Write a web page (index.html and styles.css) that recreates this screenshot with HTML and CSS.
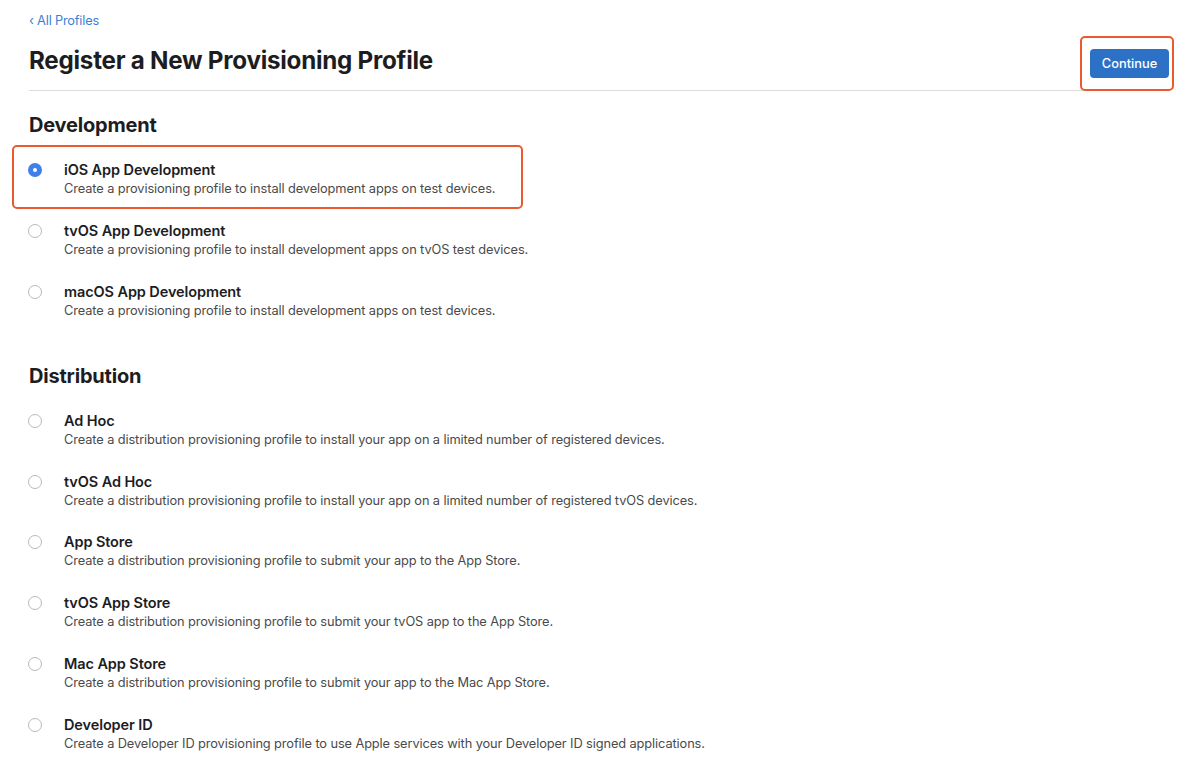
FILE: index.html
```
<!DOCTYPE html>
<html>
<head>
<meta charset="utf-8">
<link rel="stylesheet" href="styles.css">
</head>
<body>
<div class="page">
  <a class="back" href="#">&lsaquo; All Profiles</a>
  <div class="header">
    <h1 class="title">Register a New Provisioning Profile</h1>
    <div class="btn-wrap"><button class="continue">Continue</button></div>
  </div>
  <div class="divider"></div>

  <h2 class="section">Development</h2>
  <div class="options">
    <label class="option highlighted">
      <span class="radio checked"></span>
      <span class="text"><span class="name">iOS App Development</span><span class="desc">Create a provisioning profile to install development apps on test devices.</span></span>
    </label>
    <label class="option">
      <span class="radio"></span>
      <span class="text"><span class="name">tvOS App Development</span><span class="desc">Create a provisioning profile to install development apps on tvOS test devices.</span></span>
    </label>
    <label class="option">
      <span class="radio"></span>
      <span class="text"><span class="name">macOS App Development</span><span class="desc">Create a provisioning profile to install development apps on test devices.</span></span>
    </label>
  </div>

  <h2 class="section dist">Distribution</h2>
  <div class="options">
    <label class="option">
      <span class="radio"></span>
      <span class="text"><span class="name">Ad Hoc</span><span class="desc">Create a distribution provisioning profile to install your app on a limited number of registered devices.</span></span>
    </label>
    <label class="option">
      <span class="radio"></span>
      <span class="text"><span class="name">tvOS Ad Hoc</span><span class="desc">Create a distribution provisioning profile to install your app on a limited number of registered tvOS devices.</span></span>
    </label>
    <label class="option">
      <span class="radio"></span>
      <span class="text"><span class="name">App Store</span><span class="desc">Create a distribution provisioning profile to submit your app to the App Store.</span></span>
    </label>
    <label class="option">
      <span class="radio"></span>
      <span class="text"><span class="name">tvOS App Store</span><span class="desc">Create a distribution provisioning profile to submit your tvOS app to the App Store.</span></span>
    </label>
    <label class="option">
      <span class="radio"></span>
      <span class="text"><span class="name">Mac App Store</span><span class="desc">Create a distribution provisioning profile to submit your app to the Mac App Store.</span></span>
    </label>
    <label class="option">
      <span class="radio"></span>
      <span class="text"><span class="name">Developer ID</span><span class="desc">Create a Developer ID provisioning profile to use Apple services with your Developer ID signed applications.</span></span>
    </label>
  </div>
</div>
</body>
</html>
```

FILE: styles.css
```
* { box-sizing: border-box; }
html, body { margin: 0; padding: 0; background: #fff; }
body {
  font-family: Inter, "Liberation Sans", Arial, sans-serif;
  color: #1d1d1f;
  -webkit-font-smoothing: antialiased;
}
.page {
  padding: 12px 19px 0 29px;
}
.back {
  display: block;
  font-size: 12.8px;
  color: #3d7fd6;
  text-decoration: none;
  line-height: 17px;
  letter-spacing: -0.2px;
}
.header {
  display: flex;
  justify-content: space-between;
  align-items: center;
  margin-top: 6px;
  height: 56px;
}
.title {
  margin: 0;
  font-size: 24.2px;
  font-weight: 700;
  letter-spacing: -0.25px;
  line-height: 30px;
  color: #1d1d1f;
  margin-top: -5px;
}
.btn-wrap {
  border: 2px solid #ea5a2e;
  border-radius: 5px;
  padding: 11px 3px 11px 8px;
  margin-top: 1px;
}
.continue {
  display: block;
  background: #2c71c6;
  color: #fff;
  border: none;
  border-radius: 4px;
  font-family: Inter, "Liberation Sans", Arial, sans-serif;
  font-size: 12.8px;
  font-weight: 500;
  width: 79px;
  height: 29px;
  padding: 0;
}
.divider {
  height: 1px;
  background: #dcdcdc;
  margin-top: -1px;
  margin-right: 90px;
}
.section {
  margin: 22px 0 0 0;
  font-size: 20px;
  font-weight: 700;
  letter-spacing: -0.2px;
  line-height: 24px;
}
.section.dist { margin-top: 32.5px; }
.options {
  display: flex;
  flex-direction: column;
  margin-top: 12px;
}
.option {
  display: flex;
  align-items: flex-start;
  height: 60.8px;
  padding-top: 12px;
  position: relative;
}
.option.highlighted::before {
  content: "";
  position: absolute;
  left: -17px;
  top: -4px;
  width: 507px;
  height: 60px;
  border: 2px solid #ea5a2e;
  border-radius: 5px;
}
.radio {
  flex: none;
  width: 14px;
  height: 14px;
  border-radius: 50%;
  border: 1px solid #b9b9b9;
  background: #fff;
  margin-top: 2px;
  margin-right: 22px;
  margin-left: -1px;
}
.radio.checked {
  border: 5px solid #3f80ea;
  background: #fff;
}
.text {
  display: flex;
  flex-direction: column;
}
.name {
  font-size: 14.5px;
  font-weight: 600;
  line-height: 18px;
  letter-spacing: -0.1px;
  color: #1d1d1f;
}
.desc {
  font-size: 12.8px;
  line-height: 16px;
  margin-top: 2px;
  color: #4a4a4a;
  letter-spacing: -0.1px;
}
```
